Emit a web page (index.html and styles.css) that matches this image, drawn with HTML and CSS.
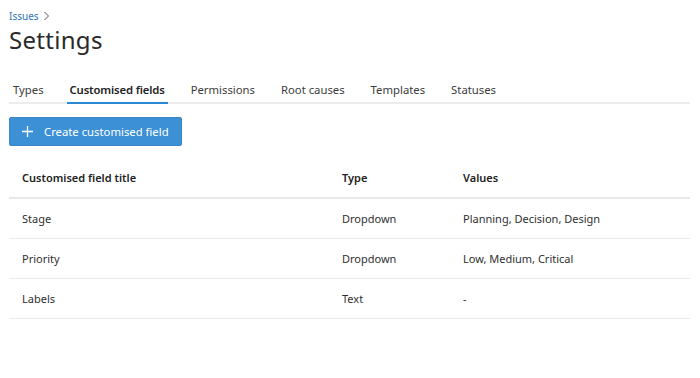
FILE: index.html
```html
<!DOCTYPE html>
<html lang="en">
<head>
    <meta charset="UTF-8">
    <title>Settings</title>
    <link rel="stylesheet" href="styles.css">
</head>
<body>
    <div class="breadcrumb">
        <a href="#">Issues</a>
        <svg class="chevron" width="7" height="10" viewBox="0 0 7 10"><path d="M1.5 1 L5.5 5 L1.5 9" fill="none" stroke="#555" stroke-width="1"/></svg>
    </div>
    <h1 class="title">Settings</h1>

    <div class="tabs">
        <div class="tab">Types</div>
        <div class="tab active">Customised fields</div>
        <div class="tab">Permissions</div>
        <div class="tab">Root causes</div>
        <div class="tab">Templates</div>
        <div class="tab">Statuses</div>
    </div>

    <button class="create-btn">
        <svg width="11" height="11" viewBox="0 0 11 11"><path d="M5.5 0 V11 M0 5.5 H11" stroke="white" stroke-width="1.3"/></svg>
        <span>Create customised field</span>
    </button>

    <table class="fields">
        <thead>
            <tr>
                <th class="col-title">Customised field title</th>
                <th class="col-type">Type</th>
                <th>Values</th>
            </tr>
        </thead>
        <tbody>
            <tr><td>Stage</td><td>Dropdown</td><td>Planning, Decision, Design</td></tr>
            <tr><td>Priority</td><td>Dropdown</td><td>Low, Medium, Critical</td></tr>
            <tr><td>Labels</td><td>Text</td><td>-</td></tr>
        </tbody>
    </table>
</body>
</html>
```

FILE: styles.css
```css
body {
    margin: 0;
    padding: 9px 10px 0 9px;
    font-family: "Noto Sans", sans-serif;
    color: #3c3c3c;
    background: white;
}
.breadcrumb {
    display: flex;
    align-items: center;
    gap: 4px;
    height: 14px;
    font-size: 10px;
}
.breadcrumb a {
    color: #2a74b8;
    text-decoration: none;
}
.title {
    margin: 1px 0 0 0;
    font-size: 24px;
    font-weight: normal;
    line-height: 32px;
    color: #2a2a2a;
    letter-spacing: 0.3px;
}
.tabs {
    display: flex;
    margin-top: 19px;
    border-bottom: 2px solid #ececec;
}
.tab {
    padding: 7px 3px 5px 3px;
    margin-right: 20px;
    font-size: 11.3px;
    color: #3c3c3c;
    border-bottom: 2px solid transparent;
    margin-bottom: -2px;
}
.tab:first-child {
    padding-left: 4px;
}
.tab.active {
    border-bottom-color: #2c87d4;
    font-weight: 600;
    color: #222;
    letter-spacing: -0.15px;
}
.create-btn {
    display: flex;
    align-items: center;
    gap: 11px;
    margin-top: 13px;
    height: 29px;
    padding: 0 12px 0 12px;
    background: #3c90d6;
    border: 1px solid #3a86c8;
    border-radius: 2px;
    color: white;
    font-family: inherit;
    font-size: 11.3px;
}
.fields {
    width: 100%;
    margin-top: 12px;
    border-collapse: collapse;
    font-size: 11px;
}
.fields th {
    text-align: left;
    font-weight: 600;
    color: #222;
    height: 39px;
    padding: 0 13px;
    border-bottom: 2px solid #e8e8e8;
}
.fields td {
    height: 39px;
    padding: 0 13px;
    border-bottom: 1px solid #ebebeb;
    color: #2f2f2f;
}
.col-title {
    width: 294px;
}
.col-type {
    width: 95px;
}
```
